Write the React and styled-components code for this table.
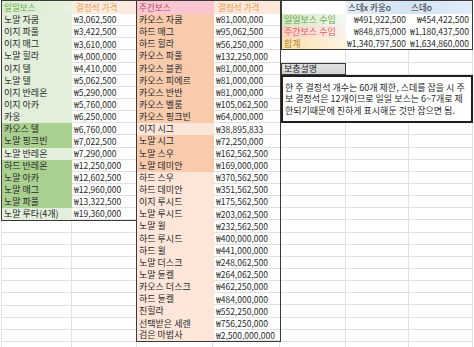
import React from "react";
import styled, { createGlobalStyle } from "styled-components";

const ROW = 12.15;
const HEAD = 14;
const GRID = "#e1e1e1";
const EDGE = "#3a3a3a";

const GlobalStyle = createGlobalStyle`
  html, body { margin: 0; padding: 0; background: #fff; }
  body { font-family: "Noto Sans CJK KR", "Noto Sans", sans-serif; color: #2a2a2a; }
`;

const daily = [
  ["노말 자쿰", "₩3,062,500"],
  ["이지 파풀", "₩3,422,500"],
  ["이지 매그", "₩3,610,000"],
  ["노말 힐라", "₩4,000,000"],
  ["이지 텔", "₩4,410,000"],
  ["노말 텔", "₩5,062,500"],
  ["이지 반레온", "₩5,290,000"],
  ["이지 아카", "₩5,760,000"],
  ["카웅", "₩6,250,000"],
  ["카오스 텔", "₩6,760,000", true],
  ["노말 핑크빈", "₩7,022,500", true],
  ["노말 반레온", "₩7,290,000"],
  ["하드 반레온", "₩12,250,000", true],
  ["노말 아카", "₩12,602,500", true],
  ["노말 매그", "₩12,960,000", true],
  ["노말 파풀", "₩13,322,500", true],
  ["노말 루타(4개)", "₩19,360,000"],
];

const weekly = [
  ["카오스 자쿰", "₩81,000,000", true],
  ["하드 매그", "₩95,062,500", true],
  ["하드 힐라", "₩56,250,000", true],
  ["카오스 파풀", "₩132,250,000", true],
  ["카오스 블퀸", "₩81,000,000", true],
  ["카오스 피에르", "₩81,000,000", true],
  ["카오스 반반", "₩81,000,000", true],
  ["카오스 벨룸", "₩105,062,500", true],
  ["카오스 핑크빈", "₩64,000,000", true],
  ["이지 시그", "₩38,895,833"],
  ["노말 시그", "₩72,250,000", true],
  ["노말 스우", "₩162,562,500", true],
  ["노말 데미안", "₩169,000,000", true],
  ["하드 스우", "₩370,562,500"],
  ["하드 데미안", "₩351,562,500"],
  ["이지 루시드", "₩175,562,500"],
  ["노말 루시드", "₩203,062,500"],
  ["노말 윌", "₩232,562,500"],
  ["하드 루시드", "₩400,000,000"],
  ["하드 윌", "₩441,000,000"],
  ["노말 더스크", "₩248,062,500"],
  ["노말 듄켈", "₩264,062,500"],
  ["카오스 더스크", "₩462,250,000"],
  ["하드 듄켈", "₩484,000,000"],
  ["진힐라", "₩552,250,000"],
  ["선택받은 세렌", "₩756,250,000"],
  ["검은 마법사", "₩2,500,000,000"],
];

const summary = [
  {
    label: "일일보스 수입",
    ink: "#6aa84f",
    fill: "linear-gradient(90deg, #cfe5c1, #f3f9ef)",
    a: "₩491,922,500",
    b: "₩454,422,500",
  },
  {
    label: "주간보스 수입",
    ink: "#e0604f",
    fill: "linear-gradient(90deg, #f8d0c4, #fdf1ec)",
    a: "₩848,875,000",
    b: "₩1,180,437,500",
  },
  {
    label: "합계",
    ink: "#b8822e",
    fill: "linear-gradient(90deg, #fbe1aa, #fdf4e3)",
    a: "₩1,340,797,500",
    b: "₩1,634,860,000",
  },
];

const Sheet = styled.div`
  display: flex;
  align-items: flex-start;
  width: 474px;
  height: 347px;
  overflow: hidden;
  padding-left: 1px;
  box-sizing: border-box;
  background: #fff;
`;

const Section = styled.div`
  display: flex;
  flex-direction: column;
  flex: none;
  width: ${(p) => p.$w}px;
  margin-left: ${(p) => p.$shift || 0}px;
`;

const Table = styled.div`
  display: grid;
  grid-template-columns: ${(p) => p.$cols};
  grid-template-rows: ${HEAD - 1}px repeat(${(p) => p.$rows - 1}, ${ROW}px) 1fr;
  height: ${(p) => HEAD + p.$rows * ROW}px;
  box-sizing: border-box;
  border: 1px solid ${EDGE};
`;

const Cell = styled.div`
  display: flex;
  align-items: center;
  justify-content: ${(p) => (p.$right ? "flex-end" : "flex-start")};
  padding: ${(p) => (p.$right ? "0 3px 0 0" : `0 0 0 ${p.$indent || 2}px`)};
  background: ${(p) => p.$fill || "#fff"};
  color: ${(p) => p.$ink || "#2a2a2a"};
  font-size: ${(p) => (p.$num ? "8.5px" : "9px")};
  line-height: 1;
  white-space: nowrap;
  overflow: hidden;
  box-sizing: border-box;
  border-bottom: 1px solid ${(p) => (p.$fill || p.$plain ? "transparent" : GRID)};
`;

const HeadCell = styled(Cell)`
  font-size: 8.6px;
`;

const Filler = styled.div`
  display: grid;
  grid-template-columns: ${(p) => p.$cols};
  grid-auto-rows: ${ROW}px;
  border-left: ${(p) => (p.$edge ? `1px solid ${GRID}` : "none")};
`;

const Blank = styled.div`
  box-sizing: border-box;
  border-right: 1px solid ${GRID};
  border-bottom: 1px solid ${GRID};
`;

const NoteLabel = styled.div`
  display: flex;
  align-items: center;
  padding-left: 2px;
  font-size: 9px;
  line-height: 1;
  color: #2a2a2a;
  background: linear-gradient(180deg, #e2e2e2, #d2d2d2);
  border: 1px solid ${EDGE};
  box-sizing: border-box;
`;

const NoteBox = styled.div`
  height: ${4 * ROW}px;
  box-sizing: border-box;
  border: 2px solid #1f1f1f;
  padding: 5px 0 0 2px;
  font-size: 9px;
  line-height: 11.6px;
  color: #2a2a2a;
  white-space: nowrap;
  overflow: hidden;
  background: #fff;
`;

const blanks = (rows, cols) =>
  Array.from({ length: rows * cols }, (_, i) => <Blank key={i} />);

export default function App() {
  return (
    <>
      <GlobalStyle />
      <Sheet>
        <Section $w={136}>
          <Table $cols="70px 1fr" $rows={daily.length}>
            <HeadCell $fill="linear-gradient(90deg, #d8ebcd, #e6f2df)" $ink="#6aa84f">
              일일보스
            </HeadCell>
            <HeadCell $fill="#fcece0" $ink="#f0994a" $indent={4}>
              결정석 가격
            </HeadCell>
            {daily.map(([name, price, dark]) => (
              <React.Fragment key={name}>
                <Cell $fill={dark ? "#a9d08e" : "#e2efda"}>{name}</Cell>
                <Cell $num>{price}</Cell>
              </React.Fragment>
            ))}
          </Table>
          <Filler $cols="70px 65px" $edge>
            {blanks(11, 2)}
          </Filler>
        </Section>

        <Section $w={145} $shift={-1}>
          <Table $cols="77px 1fr" $rows={weekly.length}>
            <HeadCell $fill="#f9c6d1" $ink="#b8436e">
              주간보스
            </HeadCell>
            <HeadCell $fill="#fde9dc" $ink="#f0994a" $indent={4}>
              결정석 가격
            </HeadCell>
            {weekly.map(([name, price, dark]) => (
              <React.Fragment key={name}>
                <Cell $fill={dark ? "#f8cbad" : "#fce6d9"}>{name}</Cell>
                <Cell $num>{price}</Cell>
              </React.Fragment>
            ))}
          </Table>
          <Filler $cols="77px 67px">{blanks(1, 2)}</Filler>
        </Section>

        <Section $w={192}>
          <Table $cols="64px 63px 1fr" $rows={summary.length}>
            <HeadCell $plain />
            <HeadCell $fill="linear-gradient(90deg, #e4eef8, #d3e3f3)">스데x 카웅o</HeadCell>
            <HeadCell $fill="linear-gradient(90deg, #d3e3f3, #e2edf8)">스데o</HeadCell>
            {summary.map((r) => (
              <React.Fragment key={r.label}>
                <Cell $fill={r.fill} $ink={r.ink}>
                  {r.label}
                </Cell>
                <Cell $num $right $plain>
                  {r.a}
                </Cell>
                <Cell $num $right $plain>
                  {r.b}
                </Cell>
              </React.Fragment>
            ))}
          </Table>
          <Filler $cols="65px 63px 64px">{blanks(1, 3)}</Filler>
          <Filler $cols="65px 63px 64px">
            <NoteLabel>보충설명</NoteLabel>
            <Blank />
            <Blank />
          </Filler>
          <NoteBox>
            한 주 결정석 개수는 60개 제한, 스데를 잡을 시 주
            <br />
            보 결정석은 12개이므로 일일 보스는 6~7개로 제
            <br />
            한되기때문에 진하게 표시해둔 것만 잡으면 됨.
          </NoteBox>
          <Filler $cols="65px 63px 64px">{blanks(19, 3)}</Filler>
        </Section>
      </Sheet>
    </>
  );
}
